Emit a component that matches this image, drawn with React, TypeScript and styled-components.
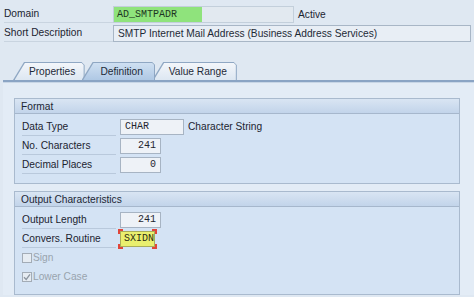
import { createGlobalStyle, styled } from "styled-components";

const GlobalStyle = createGlobalStyle`
  html, body {
    margin: 0;
    padding: 0;
    background: #dfe8f2;
  }
  body {
    font-family: "Liberation Sans", Arial, sans-serif;
    font-size: 10.2px;
    color: #1c2430;
    width: 474px;
    height: 297px;
    overflow: hidden;
  }
`;

const Page = styled.div`
  display: flex;
  flex-direction: column;
  padding-top: 5px;
`;

const HeaderGrid = styled.div`
  display: grid;
  grid-template-columns: 109px auto;
  row-gap: 1px;
  padding-left: 4px;
`;

const HeaderLabel = styled.div`
  height: 18px;
  display: flex;
  align-items: center;
  border-bottom: 1px solid #c9d4e0;
  box-sizing: border-box;
`;

const HeaderValue = styled.div`
  display: flex;
  align-items: center;
  gap: 4px;
`;

const Field = styled.div<{ $width: number }>`
  box-sizing: border-box;
  width: ${({ $width }) => $width}px;
  height: 17px;
  display: flex;
  align-items: center;
  padding: 0 4px;
  background: #e8eef5;
  border: 1px solid #a8b6c6;
  color: #1e2a36;
`;

const DomainField = styled.div`
  box-sizing: border-box;
  width: 181px;
  height: 17px;
  display: flex;
  background: #e2e9f0;
  border: 1px solid #c3cfdb;
`;

const DomainKey = styled.div`
  width: 85px;
  display: flex;
  align-items: center;
  padding-left: 3px;
  background: #8fe37c;
  font-family: "Liberation Mono", "Courier New", monospace;
  font-size: 10px;
  color: #1d3522;
`;

const TabStrip = styled.div`
  display: flex;
  margin-top: 20px;
  padding-left: 13px;
  height: 18px;
`;

const TabShape = styled.div<{ $active?: boolean; $first?: boolean }>`
  position: relative;
  z-index: ${({ $active }) => ($active ? 2 : 1)};
  margin-left: ${({ $first }) => ($first ? "0" : "-3px")};
  display: flex;
  align-items: stretch;
  background: #8fa7c3;
  clip-path: polygon(0 100%, 11px 0, calc(100% - 3px) 0, 100% 3px, 100% 100%);
`;

const TabFace = styled.div<{ $active?: boolean; $width: number }>`
  width: ${({ $width }) => $width}px;
  margin: 1px 1px 0 1.6px;
  display: flex;
  align-items: center;
  justify-content: center;
  padding-left: 6px;
  box-sizing: border-box;
  clip-path: polygon(0 100%, 10.3px 0, calc(100% - 2px) 0, 100% 2px, 100% 100%);
  background: ${({ $active }) =>
    $active
      ? "linear-gradient(#cfe0f2, #afc8e4)"
      : "linear-gradient(#f3f6fa, #dde7f2)"};
  color: #1e2a38;
`;

const TabPanel = styled.div`
  margin-left: 3px;
  border-top: 2px solid #8aa4c4;
  box-shadow: inset 0 1px 0 #c8d6e6;
  background: #e3ecf6;
  padding: 16px 0 0 11px;
  height: 215px;
  box-sizing: border-box;
  display: flex;
  flex-direction: column;
  gap: 7px;
`;

const Group = styled.section`
  width: 446px;
  box-sizing: border-box;
  border: 1px solid #a9bace;
  background: #d4e3f4;
`;

const GroupTitle = styled.div`
  height: 14px;
  display: flex;
  align-items: center;
  padding-left: 6px;
  background: linear-gradient(#d9e5f3, #c2d4ea);
  border-bottom: 1px solid #a6b7cc;
  color: #1c2634;
`;

const GroupBody = styled.div<{ $bottom: number }>`
  display: flex;
  flex-direction: column;
  padding: 3px 0 ${({ $bottom }) => $bottom}px 7px;
`;

const Row = styled.div`
  height: 19px;
  display: flex;
  align-items: center;
`;

const RowLabel = styled.div`
  width: 94px;
  height: 19px;
  display: flex;
  align-items: center;
  box-sizing: border-box;
  border-bottom: 1px solid #b9c9dc;
  margin-right: 4px;
`;

const InputBox = styled.div<{ $width: number; $align?: string }>`
  box-sizing: border-box;
  width: ${({ $width }) => $width}px;
  height: 16px;
  display: flex;
  align-items: center;
  justify-content: ${({ $align }) => ($align === "right" ? "flex-end" : "flex-start")};
  padding: 0 4px;
  background: #eef2f7;
  border: 1px solid #a7b4c3;
  font-family: "Liberation Mono", "Courier New", monospace;
  font-size: 10px;
  color: #1e2630;
`;

const Aside = styled.span`
  margin-left: 4px;
`;

const FocusFrame = styled.div`
  padding: 2px;
  margin-left: -2px;
  background:
    linear-gradient(#e0453a, #e0453a) left top / 5px 2px,
    linear-gradient(#e0453a, #e0453a) left top / 2px 5px,
    linear-gradient(#e0453a, #e0453a) right top / 5px 2px,
    linear-gradient(#e0453a, #e0453a) right top / 2px 5px,
    linear-gradient(#e0453a, #e0453a) left bottom / 5px 2px,
    linear-gradient(#e0453a, #e0453a) left bottom / 2px 5px,
    linear-gradient(#e0453a, #e0453a) right bottom / 5px 2px,
    linear-gradient(#e0453a, #e0453a) right bottom / 2px 5px;
  background-repeat: no-repeat;
`;

const HotInput = styled(InputBox)`
  background: #e9ef6e;
  border-color: #a9ad58;
  color: #2a2a10;
  padding: 0 3px;
`;

const CheckRow = styled.label`
  height: 19px;
  display: flex;
  align-items: center;
  gap: 1px;
  color: #99a3ae;
`;

const CheckBox = styled.span`
  width: 10px;
  height: 10px;
  box-sizing: border-box;
  border: 1px solid #a3acb6;
  background: #e6ecf2;
  display: flex;
  align-items: center;
  justify-content: center;
`;

const tabs = [
  { label: "Properties", width: 69 },
  { label: "Definition", width: 71, active: true },
  { label: "Value Range", width: 82 },
];

export default function App() {
  return (
    <Page>
      <GlobalStyle />
      <HeaderGrid>
        <HeaderLabel>Domain</HeaderLabel>
        <HeaderValue>
          <DomainField>
            <DomainKey>AD_SMTPADR</DomainKey>
          </DomainField>
          <span>Active</span>
        </HeaderValue>
        <HeaderLabel>Short Description</HeaderLabel>
        <HeaderValue>
          <Field $width={358}>SMTP Internet Mail Address (Business Address Services)</Field>
        </HeaderValue>
      </HeaderGrid>

      <TabStrip>
        {tabs.map((t, i) => (
          <TabShape key={t.label} $active={t.active} $first={i === 0}>
            <TabFace $active={t.active} $width={t.width}>
              {t.label}
            </TabFace>
          </TabShape>
        ))}
      </TabStrip>

      <TabPanel>
        <Group>
          <GroupTitle>Format</GroupTitle>
          <GroupBody $bottom={9}>
            <Row>
              <RowLabel>Data Type</RowLabel>
              <InputBox $width={64}>CHAR</InputBox>
              <Aside>Character String</Aside>
            </Row>
            <Row>
              <RowLabel>No. Characters</RowLabel>
              <InputBox $width={41} $align="right">241</InputBox>
            </Row>
            <Row>
              <RowLabel>Decimal Places</RowLabel>
              <InputBox $width={41} $align="right">0</InputBox>
            </Row>
          </GroupBody>
        </Group>

        <Group>
          <GroupTitle>Output Characteristics</GroupTitle>
          <GroupBody $bottom={8}>
            <Row>
              <RowLabel>Output Length</RowLabel>
              <InputBox $width={41} $align="right">241</InputBox>
            </Row>
            <Row>
              <RowLabel>Convers. Routine</RowLabel>
              <FocusFrame>
                <HotInput $width={35}>SXIDN</HotInput>
              </FocusFrame>
            </Row>
            <CheckRow>
              <CheckBox />
              Sign
            </CheckRow>
            <CheckRow>
              <CheckBox>
                <svg width="8" height="8" viewBox="0 0 8 8">
                  <path d="M1 4.2 L3.2 6.4 L7 1.4" fill="none" stroke="#8c959f" strokeWidth="1.3" />
                </svg>
              </CheckBox>
              Lower Case
            </CheckRow>
          </GroupBody>
        </Group>
      </TabPanel>
    </Page>
  );
}
